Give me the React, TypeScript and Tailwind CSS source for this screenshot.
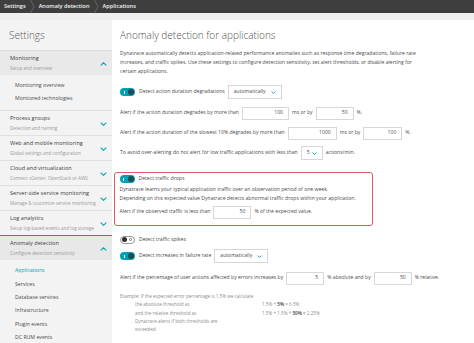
import React from "react";

const Chevron = ({ up }: { up?: boolean }) => (
  <svg width="7" height="4" viewBox="0 0 7 4" className="shrink-0">
    <path
      d={up ? "M0.7 3.4 L3.5 0.8 L6.3 3.4" : "M0.7 0.7 L3.5 3.3 L6.3 0.7"}
      fill="none"
      stroke="#00a1b2"
      strokeWidth="1.1"
    />
  </svg>
);

const SmallCaret = () => (
  <svg width="5" height="3" viewBox="0 0 5 3" className="shrink-0">
    <path d="M0.6 0.6 L2.5 2.4 L4.4 0.6" fill="none" stroke="#00a1b2" strokeWidth="0.9" />
  </svg>
);

const Toggle = ({ on }: { on: boolean }) =>
  on ? (
    <span className="inline-flex h-[8px] w-[15px] shrink-0 items-center justify-between rounded-full bg-[#00a1b2] pl-[3.5px] pr-[1px]">
      <span className="h-[3px] w-[1px] bg-white" />
      <span className="h-[6px] w-[6px] rounded-full bg-[#234a50]" />
    </span>
  ) : (
    <span className="inline-flex h-[8px] w-[15px] shrink-0 items-center justify-between rounded-full border border-[#9a9a9a] bg-white px-[1px]">
      <span className="h-[5px] w-[5px] rounded-full bg-[#2e2e2e]" />
      <span className="mr-[1px] h-[3px] w-[3px] rounded-full border-[0.8px] border-[#777]" />
    </span>
  );

const Input = ({ v, w = 46 }: { v: string; w?: number }) => (
  <span
    className="mx-[3px] inline-flex h-[13px] shrink-0 items-center justify-end border border-[#d6d6d6] bg-white pr-[5px]"
    style={{ width: w }}
  >
    {v}
  </span>
);

const Select = ({ v, w }: { v: string; w: number }) => (
  <span
    className="mx-[3px] inline-flex h-[14px] shrink-0 items-center justify-between border border-[#d6d6d6] bg-white pl-[5px] pr-[5px]"
    style={{ width: w }}
  >
    <span>{v}</span>
    <SmallCaret />
  </span>
);

const Group = ({
  title,
  sub,
  open,
  active,
}: {
  title: string;
  sub: string;
  open?: boolean;
  active?: boolean;
}) => (
  <div
    className={
      "flex h-[25px] items-center justify-between border-t pl-[10px] pr-[5px] " +
      (active ? "border-[#00a1b2] bg-[#e8e8e8]" : open ? "border-[#dcdcdc] bg-[#e9e9e9]" : "border-[#e0e0e0]")
    }
  >
    <div className="flex flex-col">
      <div className="text-[5.6px] leading-[7px] text-[#3d3d3d]">{title}</div>
      <div className="mt-[3px] whitespace-nowrap text-[4.6px] leading-[6px] text-[#9a9a9a]">{sub}</div>
    </div>
    <div className="mt-[2px]">
      <Chevron up={open} />
    </div>
  </div>
);

const Sub = ({ t, active }: { t: string; active?: boolean }) => (
  <div
    className={
      "flex h-[13.3px] items-center pl-[15px] text-[5.2px] " +
      (active ? "text-[#00a1b2]" : "text-[#4a4a4a]")
    }
  >
    {t}
  </div>
);

const Crumb = ({ t }: { t: string }) => (
  <span className="text-[5.6px] font-semibold text-[#f4f4f4]">{t}</span>
);

const Sep = () => (
  <svg width="5" height="13" viewBox="0 0 5 13" className="mx-[4px] shrink-0">
    <path d="M0.5 0 L4 6.5 L0.5 13" fill="none" stroke="#6e6e6e" strokeWidth="0.8" />
  </svg>
);

export default function App() {
  return (
    <div
      className="h-[343px] w-[474px] overflow-hidden bg-white text-[#4a4a4a]"
      style={{ fontFamily: "'Open Sans', 'Noto Sans', sans-serif" }}
    >
      <div className="flex h-[13px] items-center bg-[#3e3e3e] pl-[4px]">
        <Crumb t="Settings" />
        <Sep />
        <Crumb t="Anomaly detection" />
        <Sep />
        <Crumb t="Applications" />
      </div>
      <div className="h-[7px] bg-[#efefef]" />
      <div className="flex">
        <aside className="h-[330px] w-[112px] shrink-0 bg-[#f3f3f3]">
          <div className="mt-[8px] h-[14px] pl-[9px] text-[10px] font-light leading-[14px] text-[#5a5a5a]">
            Settings
          </div>
          <div className="mt-[8px]">
            <Group title="Monitoring" sub="Setup and overview" open />
            <div className="pb-[4px] pt-[4px]">
              <Sub t="Monitoring overview" />
              <Sub t="Monitored technologies" />
            </div>
            <Group title="Process groups" sub="Detection and naming" />
            <Group title="Web and mobile monitoring" sub="Global settings and configuration" />
            <Group title="Cloud and virtualization" sub="Connect vCenter, OpenStack or AWS" />
            <Group title="Server-side service monitoring" sub="Manage & customize service monitoring" />
            <Group title="Log analytics" sub="Setup log-based events and log storage" />
            <Group title="Anomaly detection" sub="Configure detection sensitivity" open active />
            <div className="pt-[5px]">
              <Sub t="Applications" active />
              <Sub t="Services" />
              <Sub t="Database services" />
              <Sub t="Infrastructure" />
              <Sub t="Plugin events" />
              <Sub t="DC RUM events" />
            </div>
          </div>
        </aside>
        <main className="flex-1 pl-[8px] text-[5.1px]">
          <div className="mt-[8px] h-[14px] text-[10px] font-light leading-[14px] text-[#4f4f4f]">
            Anomaly detection for applications
          </div>
          <p className="mt-[7px] whitespace-nowrap leading-[9px]">
            Dynatrace automatically detects application-related performance anomalies such as response time degradations, failure rate
            <br />
            increases, and traffic spikes. Use these settings to configure detection sensitivity, set alert thresholds, or disable alerting for
            <br />
            certain applications.
          </p>
          <div className="mt-[9px] flex h-[14px] items-center">
            <Toggle on />
            <span className="ml-[4px]">Detect action duration degradations</span>
            <Select v="automatically" w={54} />
          </div>
          <div className="mt-[7px] flex h-[14px] items-center whitespace-nowrap">
            <span>Alert if the action duration degrades by more than</span>
            <Input v="100" w={47} />
            <span>ms or by</span>
            <Input v="50" w={38} />
            <span>%.</span>
          </div>
          <div className="mt-[6px] flex h-[14px] items-center whitespace-nowrap">
            <span>Alert if the action duration of the slowest 10% degrades by more than</span>
            <Input v="1000" w={49} />
            <span>ms or by</span>
            <Input v="100" w={39} />
            <span>%.</span>
          </div>
          <div className="mt-[6px] flex h-[14px] items-center whitespace-nowrap">
            <span>To avoid over-alerting do not alert for low traffic applications with less than</span>
            <Select v="5" w={22} />
            <span>actions/min.</span>
          </div>
          <div className="-ml-[6px] mt-[12px] w-[259px] rounded-[3px] border-[1.5px] border-[#de5a60] pb-[6px] pl-[4.5px] pt-[1px]">
            <div className="flex h-[10px] items-center">
              <Toggle on />
              <span className="ml-[4px]">Detect traffic drops</span>
            </div>
            <p className="mt-[1px] whitespace-nowrap leading-[8.5px]">
              Dynatrace learns your typical application traffic over an observation period of one week.
              <br />
              Depending on this expected value Dynatrace detects abnormal traffic drops within your application.
            </p>
            <div className="mt-[3.5px] flex h-[13px] items-center whitespace-nowrap">
              <span>Alert if the observed traffic is less than</span>
              <Input v="50" w={38} />
              <span>% of the expected value.</span>
            </div>
          </div>
          <div className="mt-[9px] flex h-[10px] items-center">
            <Toggle on={false} />
            <span className="ml-[4px]">Detect traffic spikes</span>
          </div>
          <div className="mt-[4px] flex h-[15px] items-center">
            <Toggle on />
            <span className="ml-[4px]">Detect increases in failure rate</span>
            <Select v="automatically" w={54} />
          </div>
          <div className="mt-[8px] flex h-[13px] items-center whitespace-nowrap">
            <span>Alert if the percentage of user actions affected by errors increases by</span>
            <Input v="5" w={38} />
            <span>% absolute and by</span>
            <Input v="50" w={38} />
            <span>% relative.</span>
          </div>
          <div className="mt-[7.5px] text-[4.6px] leading-[8.3px] text-[#8c8c8c]">
            <div>Example: If the expected error percentage is 1.5% we calculate</div>
            <div className="flex">
              <div className="w-[142px] pl-[15px]">the absolute threshold as</div>
              <div>
                1.5% + <b className="text-[#666]">5%</b> = 6.5%
              </div>
            </div>
            <div className="flex">
              <div className="w-[142px] pl-[15px]">and the relative threshold as</div>
              <div>
                1.5% + 1.5% * <b className="text-[#666]">50%</b> = 2.25%
              </div>
            </div>
            <div className="pl-[15px]">Dynatrace alerts if both thresholds are</div>
            <div className="pl-[15px]">exceeded.</div>
          </div>
        </main>
      </div>
    </div>
  );
}
